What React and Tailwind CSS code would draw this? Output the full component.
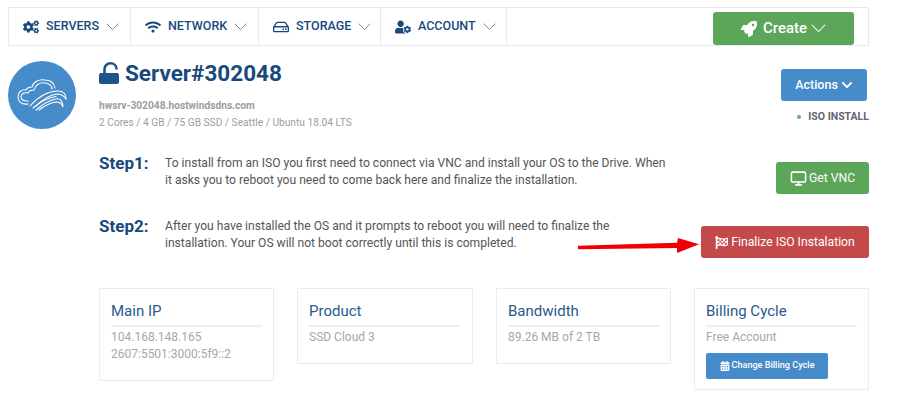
import { Monitor } from 'lucide-react'
import {
  FaCogs,
  FaWifi,
  FaRegHdd,
  FaUserCog,
  FaRocket,
  FaChevronDown,
  FaFlagCheckered,
  FaCalendarAlt,
} from 'react-icons/fa'

const navItems = [
  { label: 'SERVERS', icon: FaCogs, width: 'w-[122px]' },
  { label: 'NETWORK', icon: FaWifi, width: 'w-[128px]' },
  { label: 'STORAGE', icon: FaRegHdd, width: 'w-[122px]' },
  { label: 'ACCOUNT', icon: FaUserCog, width: 'w-[126px]' },
]

function Chevron({ width, className }) {
  return (
    <svg width={width} height={width * 0.55} viewBox="0 0 20 11" fill="none" stroke="currentColor" strokeWidth="1.4" className={className}>
      <path d="M1 1l9 9 9-9" />
    </svg>
  )
}

function UnlockIcon() {
  return (
    <svg width="20" height="22" viewBox="0 0 20 22" className="shrink-0 text-[#1f5486]">
      <path d="M5.5 12V7c0-3.2 2.6-5.7 6-5.7s6 2.5 6 5.7v.5" fill="none" stroke="currentColor" strokeWidth="2.6" />
      <rect x="0" y="11" width="20" height="11" rx="2" fill="currentColor" />
    </svg>
  )
}

function CloudLogo() {
  return (
    <div className="flex h-[68px] w-[68px] shrink-0 items-center justify-center rounded-full bg-[#468bca]">
      <svg width="52" height="36" viewBox="0 0 52 36" fill="none" stroke="#fff" strokeWidth="1.1" strokeLinecap="round">
        <path d="M12 27C5 28 2 24 2 20C2 15 6 12 10 13C11 11 13 10 16 10C17 5 23 2 29 3C34 3 38 6 39 11" />
        <path d="M12 24C7 24 5 22 5 20C5 17 8 15 12 16C13 14 15 13 18 13C19 8 24 5 29 6C33 6 36 9 36 12" />
        <path d="M14 29C22 20 32 14 42 14C47 14 50 17 50 22C48 19 45 17 41 17C33 18 26 23 20 29" />
        <path d="M20 33C27 27 33 23 40 22C44 21 47 24 47 30C46 27 43 25 40 25C34 26 28 29 23 33" />
        <path d="M17 31C24 25 31 21 40 19.5" />
      </svg>
    </div>
  )
}

function NavBar() {
  return (
    <nav className="flex h-[39px] w-[861px] items-stretch border-[1.5px] border-[#e6ebf3] bg-white">
      {navItems.map((item) => {
        const Icon = item.icon
        return (
          <div
            key={item.label}
            className={`flex ${item.width} items-center gap-[7px] border-r-[1.5px] border-[#e6ebf3] pl-[14px] text-[#174a7c]`}
          >
            <Icon className="shrink-0 text-[16px]" />
            <span className="text-[12.5px] font-medium">{item.label}</span>
            <Chevron width={13} className="text-[#5f83a8]" />
          </div>
        )
      })}
      <div className="ml-auto mr-[14px] flex items-end">
        <button className="flex h-[33px] w-[141px] items-center justify-center gap-[6px] rounded-[3px] bg-[#5ca65a] text-white">
          <FaRocket className="text-[16px]" />
          <span className="text-[15px] font-medium">Create</span>
          <Chevron width={15} className="-ml-[2px]" />
        </button>
      </div>
    </nav>
  )
}

function Step({ label, button, children }) {
  return (
    <div className="flex items-start justify-between">
      <div className="flex">
        <div className="w-[66px] text-[17px] font-bold leading-[18px] text-[#174a7c]">{label}</div>
        <p className="w-[505px] pt-[1px] text-[12.1px] leading-[17px] text-[#555]">{children}</p>
      </div>
      {button}
    </div>
  )
}

function InfoCard({ title, children }) {
  return (
    <div className="border-[1.5px] border-[#ececec] bg-white px-[11px] pb-[10px] pt-[12px]">
      <h3 className="border-b-2 border-[#f0f0f0] pb-[4px] text-[15px] leading-[20px] text-[#2a5a8c]">{title}</h3>
      <div className="min-h-[26px] pt-[2px] text-[12px] leading-[16.5px] text-[#a3a7ad]">{children}</div>
    </div>
  )
}

export default function App() {
  return (
    <div className="relative h-[416px] w-[900px] overflow-hidden bg-white pl-2 pt-[7px] font-['Roboto',sans-serif]">
      <NavBar />

      {/* Server header */}
      <div className="mt-[15px] flex w-[861px] items-start">
        <CloudLogo />
        <div className="ml-[23px]">
          <h1 className="-mt-[1px] flex items-center gap-[6px] text-[22.5px] font-bold leading-[26px] text-[#174a7c]">
            <UnlockIcon />
            Server#302048
          </h1>
          <div className="mt-[12px] text-[10.2px] font-bold leading-[16px] text-[#9a9da3]">hwsrv-302048.hostwindsdns.com</div>
          <div className="text-[10.2px] leading-[17px] text-[#9a9da3]">2 Cores / 4 GB / 75 GB SSD / Seattle / Ubuntu 18.04 LTS</div>
        </div>
        <div className="ml-auto flex flex-col items-end pt-[8px]">
          <button className="mr-[2px] flex h-[32px] w-[86px] items-center justify-center gap-[3px] rounded-[3px] bg-[#468bca] text-[12.5px] font-medium text-white">
            Actions
            <FaChevronDown className="text-[12px]" />
          </button>
          <div className="mt-[9px] flex items-center gap-[7px] text-[10.5px] font-bold leading-[14px] text-[#5f6670]">
            <span className="h-[4px] w-[4px] rounded-full bg-[#6fae6c]" />
            ISO INSTALL
          </div>
        </div>
      </div>

      {/* Install steps */}
      <div className="mt-[23px] ml-[91px] flex w-[770px] flex-col gap-[23px]">
        <Step
          label="Step1:"
          button={
            <button className="mt-[8px] flex h-[32px] w-[93px] items-center justify-center gap-[2px] rounded-[3px] bg-[#5ca65a] text-[12.2px] text-white">
              <Monitor size={17} strokeWidth={2.2} />
              Get VNC
            </button>
          }
        >
          To install from an ISO you first need to connect via VNC and install your OS to the Drive. When it asks you to reboot you need to come back here and finalize the installation.
        </Step>
        <Step
          label="Step2:"
          button={
            <button className="mt-[9px] flex h-[32px] w-[168px] items-center justify-center gap-[3px] rounded-[3px] bg-[#c44a4a] text-[12.2px] text-white">
              <FaFlagCheckered className="text-[13px]" />
              Finalize ISO Instalation
            </button>
          }
        >
          After you have installed the OS and it prompts to reboot you will need to finalize the installation. Your OS will not boot correctly until this is completed.
        </Step>
      </div>

      {/* Arrow pointing at the finalize button */}
      <svg className="absolute left-[576px] top-[234px]" width="126" height="20" viewBox="0 0 126 20">
        <path d="M2 11.7 L101 8.7 L102 4 L123 10.3 L101 19 L101 14 L2 15.3 Z" fill="#f00000" />
      </svg>

      {/* Info cards */}
      <div className="mt-[30px] ml-[91px] grid w-[770px] grid-cols-[175px_176px_175px_175px] items-start gap-x-[23px]">
        <InfoCard title="Main IP">
          104.168.148.165
          <br />
          2607:5501:3000:5f9::2
          <div className="h-[8px]" />
        </InfoCard>
        <InfoCard title="Product">SSD Cloud 3</InfoCard>
        <InfoCard title="Bandwidth">89.26 MB of 2 TB</InfoCard>
        <InfoCard title="Billing Cycle">
          Free Account
          <button className="mt-[7px] flex h-[26px] w-[122px] items-center justify-center gap-[2px] rounded-[2px] bg-[#468bca] text-[9.1px] font-medium text-white">
            <FaCalendarAlt className="text-[10px]" />
            Change Billing Cycle
          </button>
        </InfoCard>
      </div>
    </div>
  )
}
